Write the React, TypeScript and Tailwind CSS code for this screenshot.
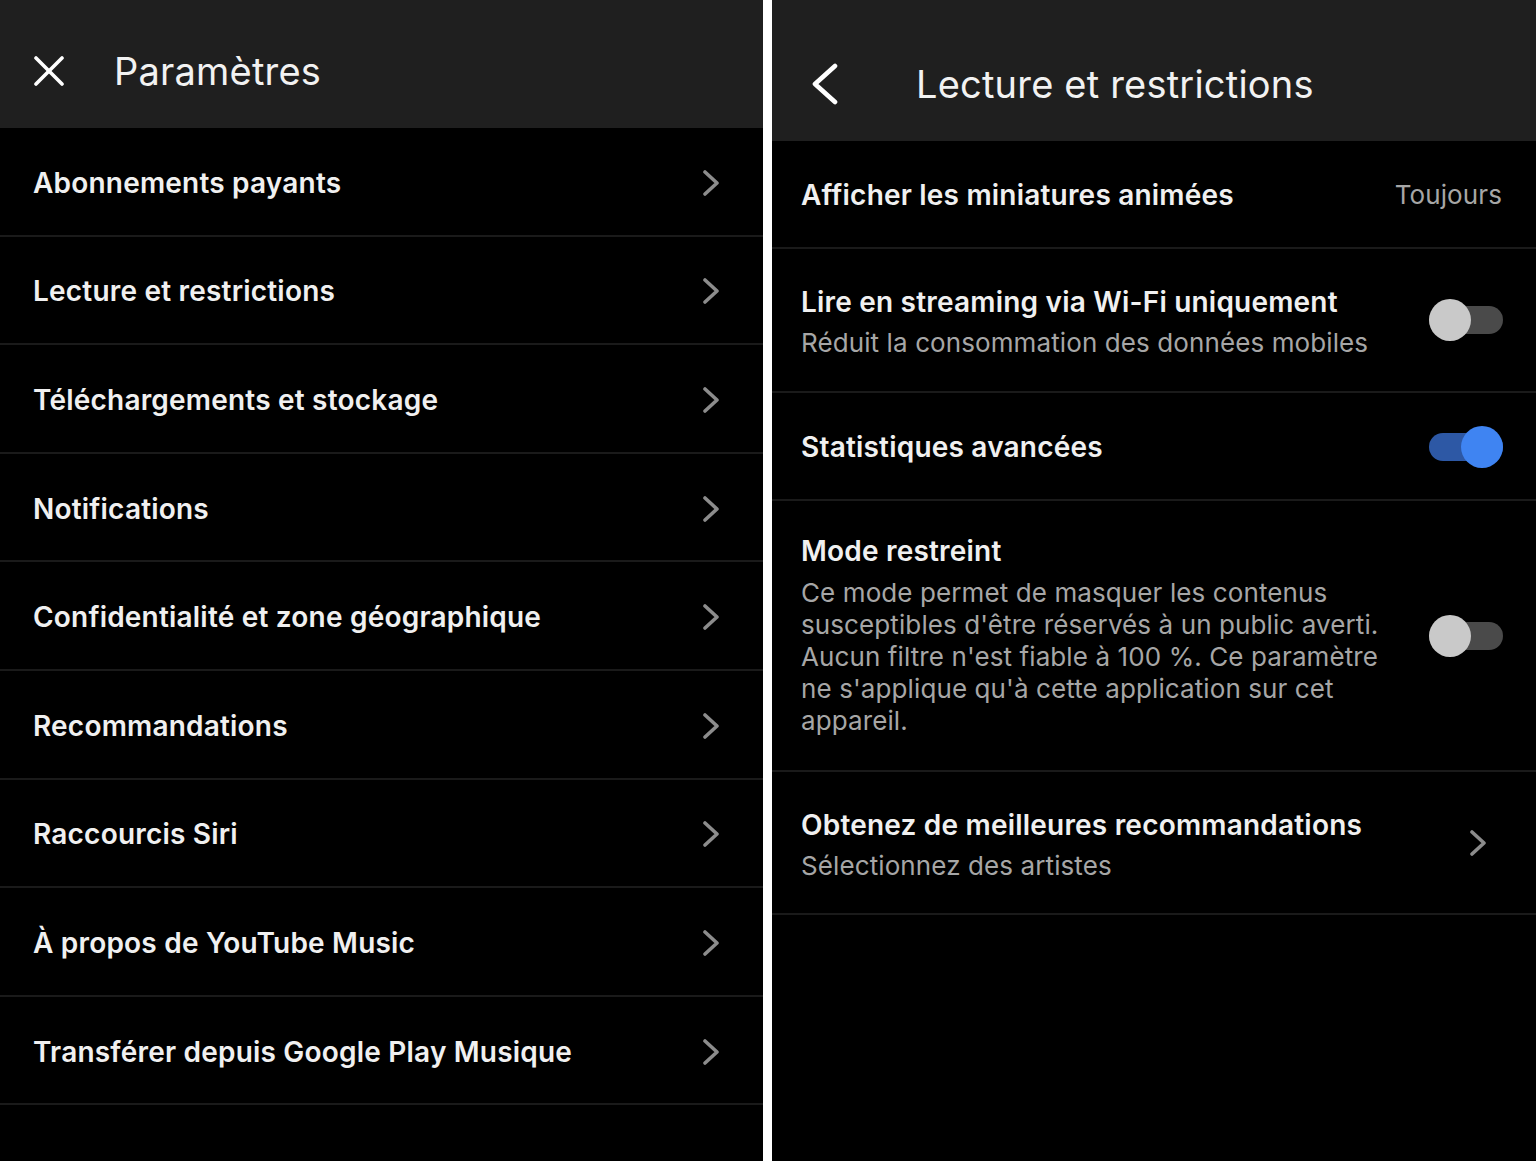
import React from 'react';

const leftItems = [
  'Abonnements payants',
  'Lecture et restrictions',
  'Téléchargements et stockage',
  'Notifications',
  'Confidentialité et zone géographique',
  'Recommandations',
  'Raccourcis Siri',
  'À propos de YouTube Music',
  'Transférer depuis Google Play Musique',
];

const Chevron = () => (
  <svg width="18" height="26" viewBox="0 0 18 26" fill="none">
    <polyline points="3,2 15,13 3,24" stroke="#8c8c8c" strokeWidth="3.6" strokeLinecap="round" strokeLinejoin="round" />
  </svg>
);

const Toggle = ({ on }: { on: boolean }) =>
  on ? (
    <div className="relative w-[74px] h-[42px] flex items-center shrink-0">
      <div className="w-full h-[28px] rounded-full bg-[#2d58a5]" />
      <div className="absolute right-0 top-0 w-[42px] h-[42px] rounded-full bg-[#3f84f2]" />
    </div>
  ) : (
    <div className="relative w-[74px] h-[42px] flex items-center shrink-0">
      <div className="w-full h-[28px] rounded-full bg-[#4a4a4a]" />
      <div className="absolute left-0 top-0 w-[42px] h-[42px] rounded-full bg-[#c9c9c9]" />
    </div>
  );

const Title = ({ children }: { children: React.ReactNode }) => (
  <span className="text-[28px] font-semibold text-[#f0f0f0] leading-[34px] tracking-[0.2px]">{children}</span>
);

const Sub = ({ children }: { children: React.ReactNode }) => (
  <span className="text-[26px] text-[#a6a6a6] leading-[32px] tracking-[0.1px]">{children}</span>
);

export default function App() {
  return (
    <div className="w-[1536px] h-[1161px] flex bg-white overflow-hidden" style={{ fontFamily: 'Inter, "Noto Sans", sans-serif' }}>
      {/* left panel */}
      <div className="w-[763px] h-full bg-black flex flex-col">
        <header className="h-[128px] bg-[#1f1f1f] flex items-center shrink-0 pt-[14px]">
          <svg className="ml-[34px]" width="30" height="30" viewBox="0 0 30 30" fill="none">
            <line x1="2" y1="2" x2="28" y2="28" stroke="#fff" strokeWidth="3.6" strokeLinecap="round" />
            <line x1="28" y1="2" x2="2" y2="28" stroke="#fff" strokeWidth="3.6" strokeLinecap="round" />
          </svg>
          <h1 className="ml-[50px] text-[38px] leading-[44px] font-normal text-[#f2f2f2] tracking-[0.2px]">Paramètres</h1>
        </header>
        {leftItems.map((item) => (
          <div key={item} className="h-[108.6px] shrink-0 flex items-center justify-between pl-[33px] pr-[43px] pt-[3px] border-b-2 border-[#1a1a1a]">
            <Title>{item}</Title>
            <Chevron />
          </div>
        ))}
      </div>

      {/* divider */}
      <div className="w-[9px] h-full bg-white" />

      {/* right panel */}
      <div className="flex-1 h-full bg-black flex flex-col">
        <header className="h-[141px] bg-[#1f1f1f] flex items-center shrink-0 pt-[26px]">
          <svg className="ml-[38px]" width="30" height="42" viewBox="0 0 30 42" fill="none">
            <polyline points="25,3 5,21 25,39" stroke="#fff" strokeWidth="4.6" strokeLinecap="round" strokeLinejoin="round" />
          </svg>
          <h1 className="ml-[76px] text-[38px] leading-[44px] font-normal text-[#f2f2f2] tracking-[0.2px]">Lecture et restrictions</h1>
        </header>

        <div className="h-[108px] shrink-0 flex items-center justify-between pl-[29px] pr-[34px] pt-[2px] border-b-2 border-[#1a1a1a]">
          <Title>Afficher les miniatures animées</Title>
          <Sub>Toujours</Sub>
        </div>

        <div className="h-[144px] shrink-0 flex items-center justify-between pl-[29px] pr-[33px] border-b-2 border-[#1a1a1a]">
          <div className="flex flex-col gap-[8px] pt-[4px]">
            <Title>Lire en streaming via Wi-Fi uniquement</Title>
            <Sub>Réduit la consommation des données mobiles</Sub>
          </div>
          <Toggle on={false} />
        </div>

        <div className="h-[108px] shrink-0 flex items-center justify-between pl-[29px] pr-[33px] pt-[2px] border-b-2 border-[#1a1a1a]">
          <Title>Statistiques avancées</Title>
          <Toggle on={true} />
        </div>

        <div className="h-[271px] shrink-0 flex items-center justify-between pl-[29px] pr-[33px] border-b-2 border-[#1a1a1a]">
          <div className="flex flex-col gap-[9px] w-[596px]">
            <Title>Mode restreint</Title>
            <Sub>
              Ce mode permet de masquer les contenus susceptibles d'être réservés à un public averti. Aucun filtre n'est fiable à 100 %. Ce paramètre ne s'applique qu'à cette application sur cet appareil.
            </Sub>
          </div>
          <Toggle on={false} />
        </div>

        <div className="h-[143px] shrink-0 flex items-center justify-between pl-[29px] pr-[49px] border-b-2 border-[#1a1a1a]">
          <div className="flex flex-col gap-[8px] pt-[4px]">
            <Title>Obtenez de meilleures recommandations</Title>
            <Sub>Sélectionnez des artistes</Sub>
          </div>
          <Chevron />
        </div>
      </div>
    </div>
  );
}
